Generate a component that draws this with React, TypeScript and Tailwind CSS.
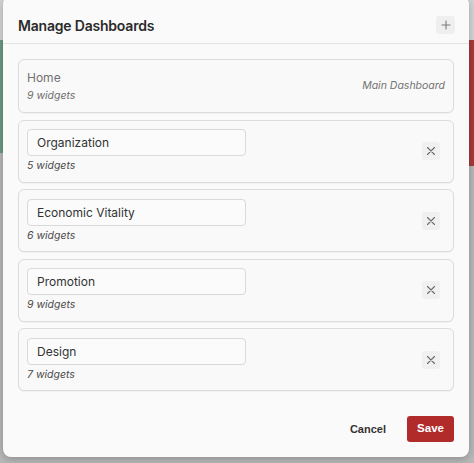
import React from 'react';

const dashboards = [
  { name: 'Organization', count: 5 },
  { name: 'Economic Vitality', count: 6 },
  { name: 'Promotion', count: 9 },
  { name: 'Design', count: 7 },
];

const XIcon = () => (
  <svg width="10" height="10" viewBox="0 0 10 10" fill="none" stroke="#6b6b6b" strokeWidth="1.1" strokeLinecap="round">
    <path d="M1.5 1.5l7 7M8.5 1.5l-7 7" />
  </svg>
);

const PlusIcon = () => (
  <svg width="10" height="10" viewBox="0 0 10 10" fill="none" stroke="#7a7a7a" strokeWidth="1.1" strokeLinecap="round">
    <path d="M5 1v8M1 5h8" />
  </svg>
);

const App = () => {
  return (
    <div className="relative h-[463px] w-[474px] overflow-hidden bg-[#b9b9b9] font-['Inter',sans-serif]">
      {/* page behind the modal */}
      <div className="absolute left-0 top-0 h-[40px] w-full bg-[#d6d6d6]" />
      <div className="absolute left-0 top-[40px] h-[113px] w-[10px] bg-[#6f9885]" />
      <div className="absolute right-0 top-[40px] h-[126px] w-[10px] bg-[#a83a3a]" />

      <section className="absolute left-[3px] top-[-4px] flex h-[461px] w-[466px] flex-col rounded-lg bg-[#fafafa] shadow-[0_2px_8px_rgba(0,0,0,0.25)]">
        <header className="flex h-[48px] items-center justify-between border-b border-[#e4e4e4] pl-[15px] pr-[14px] pt-[11px]">
          <h2 className="text-[14px] font-semibold tracking-[-0.2px] text-[#2b2b2b]">Manage Dashboards</h2>
          <button className="flex h-[18px] w-[19px] items-center justify-center rounded-[3px] bg-[#efefef]">
            <PlusIcon />
          </button>
        </header>

        <div className="flex flex-col gap-[6.5px] px-[15px] pt-[15px]">
          <div className="flex h-[54px] items-center justify-between rounded-md border border-[#dcdcdc] bg-[#f9f9f9] pl-[8px] pr-[8px] shadow-[0_1px_1px_rgba(0,0,0,0.04)]">
            <div className="flex flex-col">
              <span className="text-[12px] leading-[18px] text-[#717171]">Home</span>
              <span className="mt-[2px] text-[10.5px] italic leading-[14px] text-[#6e6e6e]">9 widgets</span>
            </div>
            <span className="text-[10.5px] italic text-[#747474]">Main Dashboard</span>
          </div>

          {dashboards.map((d) => (
            <div
              key={d.name}
              className="flex h-[63px] items-center justify-between rounded-md border border-[#dcdcdc] bg-[#f9f9f9] pl-[8px] pr-[13px] shadow-[0_1px_1px_rgba(0,0,0,0.04)]"
            >
              <div className="flex flex-col">
                <input
                  type="text"
                  defaultValue={d.name}
                  className="h-[27px] w-[219px] rounded-[4px] border border-[#d9d9d9] bg-[#fbfbfb] px-[9px] text-[12px] text-[#333] outline-none"
                />
                <span className="mt-[3px] text-[10.5px] italic leading-[14px] text-[#4a4a4a]">{d.count} widgets</span>
              </div>
              <button className="flex h-[18px] w-[18px] items-center justify-center rounded-[3px] bg-[#f0f0f0]">
                <XIcon />
              </button>
            </div>
          ))}
        </div>

        <footer className="mt-auto flex items-center justify-end gap-[21px] pb-[15px] pr-[15px]">
          <button className="font-['Liberation_Sans',Arial,sans-serif] text-[11px] font-bold text-[#333]">Cancel</button>
          <button className="h-[26px] w-[47px] rounded-[3px] bg-[#b22b2b] font-['Liberation_Sans',Arial,sans-serif] text-[11.5px] font-bold text-white">
            Save
          </button>
        </footer>
      </section>
    </div>
  );
};

export default App;
